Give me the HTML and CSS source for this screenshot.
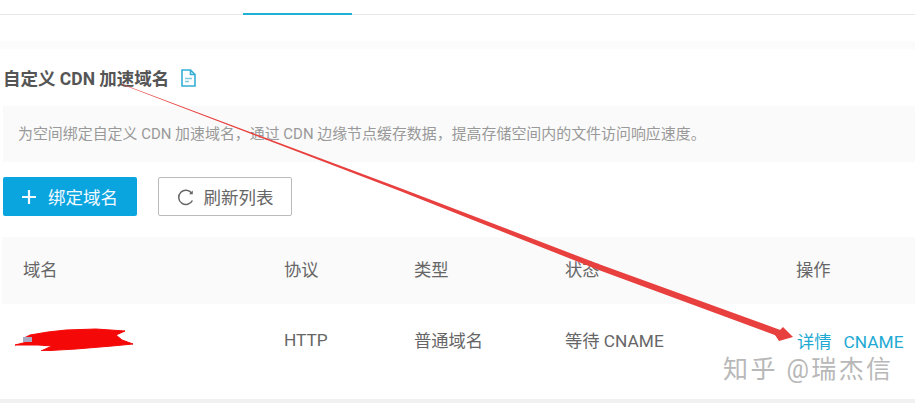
FILE: index.html
```html
<!DOCTYPE html>
<html lang="zh-CN">
<head>
<meta charset="utf-8">
<title>自定义 CDN 加速域名</title>
<link rel="stylesheet" href="styles.css">
</head>
<body>
<div class="page">
  <nav class="tabs"><span class="tab"></span></nav>
  <div class="band"></div>
  <section class="content">
    <h2 class="title">自定义 CDN 加速域名
      <svg class="doc" viewBox="0 0 15 18" width="15" height="18"><path d="M1 1h8.500l4.500 4.500V17H1z M9.500 1v4.500h4.500" fill="none" stroke="#35aed6" stroke-width="1.600"/><path d="M4 9.500h7M4 12.500h4" stroke="#7cc8e0" stroke-width="1.300"/></svg>
    </h2>
    <p class="notice">为空间绑定自定义 CDN 加速域名，通过 CDN 边缘节点缓存数据，提高存储空间内的文件访问响应速度。</p>
    <div class="actions">
      <button class="btn primary"><svg class="plus" viewBox="0 0 14 14" width="14" height="14"><path d="M7 0v14M0 7h14" stroke="#f2f9ff" stroke-width="2.200"/></svg>绑定域名</button>
      <button class="btn ghost">
        <svg viewBox="0 0 18 18" width="18" height="18"><path d="M14.800 5.200A7.200 7.200 0 1 0 15.400 12.500" fill="none" stroke="#666" stroke-width="1.500"/><path d="M15.800 2.500v3.800h-3.800z" fill="#666"/></svg>
        刷新列表</button>
    </div>
    <div class="table">
      <div class="row head">
        <span>域名</span><span>协议</span><span>类型</span><span>状态</span><span>操作</span>
      </div>
      <div class="row body">
        <span></span><span>HTTP</span><span>普通域名</span><span>等待 CNAME</span>
        <span class="links"><a>详情</a><a>CNAME</a></span>
      </div>
    </div>
  </section>
  <div class="foot"></div>
  <svg class="scribble" viewBox="0 0 135 26" width="135" height="26">
    <path d="M15 20 L27 17 L24 13 L30 10 L48 7 L66 5 L96 4 L125 6 L116 10 L122 15 L133 19 L112 21 L76 24 L41 26 L52 21 L38 20 Z" fill="#f40808" stroke="#f40808" stroke-width="1"/>
    <rect x="23" y="12" width="9" height="5" fill="#a9a9c4"/>
  </svg>
  <svg class="arrow" viewBox="0 0 915 403" width="915" height="403">
    <path d="M122 84 L400 188 L600 264.500 L783 331 L780 337 L600 270.500 L400 191 L250 133.500 L122 84.500 Z" fill="#e8403f"/>
    <path d="M793 337 L779 341 L775 335 L783 327 Z" fill="#e8403f"/>
  </svg>
  <div class="mark">知乎 @瑞杰信</div>
</div>
</body>
</html>
```
FILE: styles.css
```css
* { box-sizing: border-box; }
html, body { margin: 0; padding: 0; background: #fff; }
body { font-family: Roboto, "Noto Sans CJK SC", sans-serif; color: #666; }
.page { position: relative; width: 915px; height: 403px; overflow: hidden; }
.tabs { height: 15px; border-bottom: 1px solid #e8e8e8; padding-left: 243px; }
.tab { display: block; width: 109px; height: 15px; border-bottom: 2px solid #1fb0d6; }
.band { height: 8px; margin-top: 26px; background: #fbfbfb; }
.content { padding-left: 3px; }
.title { display: flex; align-items: center; gap: 12px; margin: 0; height: 57px; font-size: 17.500px; font-weight: 700; color: #555; }
.notice { margin: 0; height: 56px; padding: 0 0 4px 15px; display: flex; align-items: center; font-size: 14.950px; color: #999; background: #fafafa; }
.actions { display: flex; gap: 21px; margin-top: 15px; }
.btn { display: flex; align-items: center; justify-content: center; width: 134px; height: 39px; padding: 0; font-family: inherit; font-size: 17.500px; border-radius: 2px; }
.primary { background: #0aa5df; border: 0; color: #f2f9ff; }
.plus { margin-right: 12px; }
.ghost { background: #fff; border: 1px solid #bbb; color: #666; gap: 9px; }
.table { margin-top: 21px; margin-left: -1px; }
.row { display: grid; grid-template-columns: 261px 130px 151px 231px 1fr; padding-left: 21px; font-size: 17.300px; align-items: center; }
.head { height: 67px; padding-bottom: 4px; background: #fafafa; }
.body { height: 73px; padding-bottom: 2px; }
.body span { color: #666; }
.links { display: flex; gap: 12px; align-items: baseline; margin-top: 1px; margin-left: 1px; }
.links a { color: #22a9d3; }
.foot { position: absolute; left: 0; right: 0; bottom: 0; height: 4px; background: #f1f1f1; }
.scribble { position: absolute; left: 0; top: 325px; }
.arrow { position: absolute; left: 0; top: 0; }
.mark { position: absolute; left: 723px; top: 349px; font-size: 25px; letter-spacing: 2.400px; color: #b8b8b8; white-space: nowrap; }
```
